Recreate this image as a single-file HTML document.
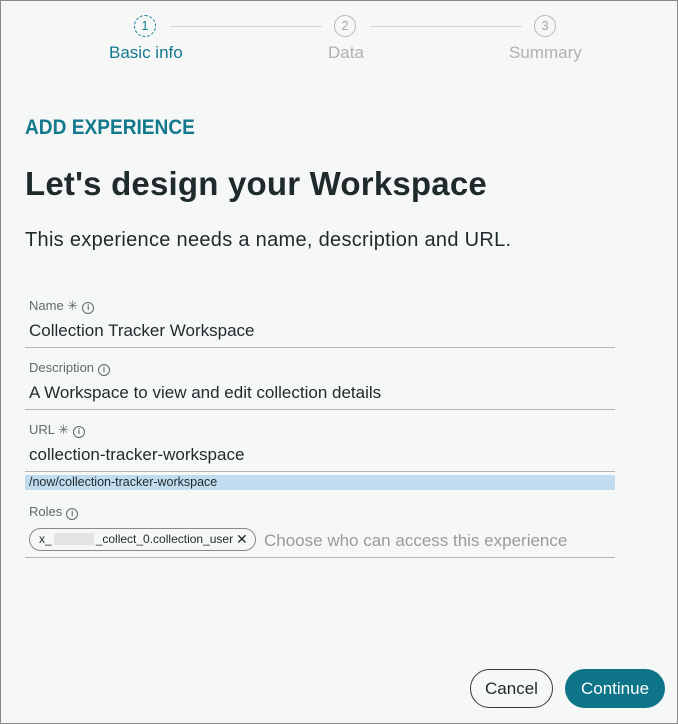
<!DOCTYPE html>
<html><head><style>
body{margin:0;width:678px;height:724px;background:#f6f7f7;font-family:"Liberation Sans",sans-serif;position:relative;overflow:hidden}
.frame{position:absolute;left:0;top:0;width:676px;height:722px;border:1px solid #8a8a8a}
.a{position:absolute;white-space:nowrap}
.circ{position:absolute;width:22px;height:22px;border-radius:50%;border:1.5px solid #b8b8b8;box-sizing:border-box;text-align:center;line-height:19px;font-size:13px;color:#aaa}
.ln{position:absolute;height:1px;background:#d4d4d4;top:26px}
.lab{font-size:13px;color:#5f6b6d}
.val{font-size:17px;color:#1f2a2c}
.hr{position:absolute;left:25px;width:590px;height:1px;background:#b5b5b5}
.i{display:inline-block;width:10px;height:10px;border:1px solid #5f6b6d;border-radius:50%;font-size:8px;line-height:10px;text-align:center;vertical-align:0px;margin-left:4px;font-weight:bold}
</style></head><body>
<div class="frame"></div>
<div class="circ" style="left:134px;top:15px;border:1.5px dashed #1a7f95;color:#1a7f95">1</div>
<div class="circ" style="left:334px;top:15px">2</div>
<div class="circ" style="left:534px;top:15px">3</div>
<div class="ln" style="left:170px;width:152px"></div>
<div class="ln" style="left:370px;width:152px"></div>
<div class="a" style="left:109px;top:43px;font-size:17px;color:#137a8e">Basic info</div>
<div class="a" style="left:328px;top:43px;font-size:17px;color:#b0b0b0">Data</div>
<div class="a" style="left:509px;top:43px;font-size:17px;color:#b0b0b0">Summary</div>
<div class="a" style="left:25px;top:116px;font-size:21px;font-weight:bold;color:#137a8e;transform:scaleX(0.91);transform-origin:left">ADD EXPERIENCE</div>
<div class="a" style="left:25px;top:165px;font-size:33px;font-weight:bold;color:#1f2a2c;letter-spacing:0.2px">Let's design your Workspace</div>
<div class="a" style="left:25px;top:229px;font-size:20px;color:#1f2a2c;letter-spacing:0.3px">This experience needs a name, description and URL.</div>

<div class="a lab" style="left:29px;top:298px">Name ✳<span class="i">i</span></div>
<div class="a val" style="left:29px;top:321px">Collection Tracker Workspace</div>
<div class="hr" style="top:347px"></div>
<div class="a lab" style="left:29px;top:360px">Description<span class="i">i</span></div>
<div class="a val" style="left:29px;top:383px">A Workspace to view and edit collection details</div>
<div class="hr" style="top:409px"></div>
<div class="a lab" style="left:29px;top:422px">URL ✳<span class="i">i</span></div>
<div class="a val" style="left:29px;top:445px">collection-tracker-workspace</div>
<div class="hr" style="top:471px"></div>
<div class="a" style="left:25px;top:475px;width:590px;height:15px;background:#c2dcef;font-size:12.5px;line-height:15px;color:#1f2a2c;padding-left:4px;box-sizing:border-box">/now/collection-tracker-workspace</div>
<div class="a lab" style="left:29px;top:504px">Roles<span class="i">i</span></div>
<div class="a" style="left:29px;top:528px;width:227px;height:23px;border:1px solid #8a8a8a;border-radius:12px;box-sizing:border-box;font-size:12px;line-height:21px;color:#1f2a2c;padding-left:9px">x_<span style="display:inline-block;width:40px;height:12px;background:#e4e4e4;vertical-align:-2px;margin:0 2px"></span>_collect_0.collection_user</div>
<div class="a" style="left:236px;top:531px;font-size:14px;color:#1f2a2c">✕</div>
<div class="a" style="left:264px;top:531px;font-size:17px;color:#9a9a9a">Choose who can access this experience</div>
<div class="hr" style="top:557px"></div>

<div class="a" style="left:470px;top:669px;width:83px;height:39px;border:1px solid #3a3a3a;border-radius:20px;box-sizing:border-box;text-align:center;line-height:37px;font-size:17px;color:#1f2a2c">Cancel</div>
<div class="a" style="left:565px;top:669px;width:100px;height:39px;background:#0e7488;border-radius:20px;text-align:center;line-height:39px;font-size:17px;color:#fff">Continue</div>
</body></html>
